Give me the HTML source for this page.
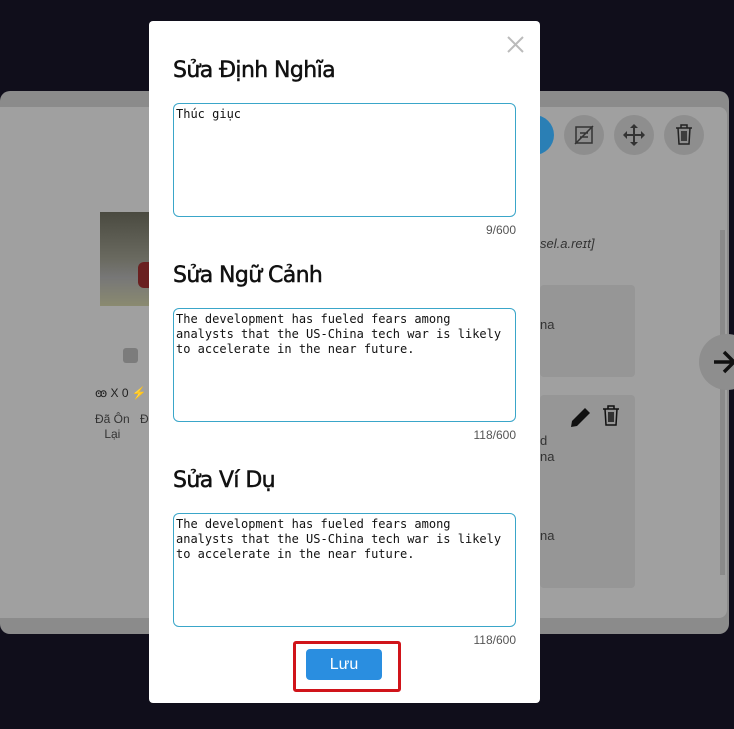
<!DOCTYPE html>
<html><head><meta charset="utf-8"><style>
*{box-sizing:border-box;margin:0;padding:0}
body{width:734px;height:729px;background:#100e1b;position:relative;overflow:hidden;font-family:"Liberation Sans",sans-serif}
.abs{position:absolute}
.outer{left:0;top:91px;width:729px;height:543px;background:#8b8b8b;border-radius:10px}
.inner{left:0;top:107px;width:727px;height:511px;background:#a0a0a0;border-radius:0 8px 8px 0}
.circ{border-radius:50%;background:#8e8e8e;width:40px;height:40px;top:115px}
.gbox{background:#969696;border-radius:4px}
.modal{left:149px;top:21px;width:391px;height:682px;background:#fff;border-radius:4px}
h2{position:absolute;left:24px;font-size:22px;font-weight:normal;color:#111;font-family:"DejaVu Sans","Liberation Sans",sans-serif;letter-spacing:-0.6px;-webkit-text-stroke:0.5px #111}
.ta{position:absolute;left:24px;width:343px;height:114px;border:1px solid #3aa6c9;border-radius:6px;font-family:"DejaVu Sans Mono",monospace;font-size:12px;line-height:15px;padding:3px 2px;color:#111}
.cnt{position:absolute;right:24px;font-size:12px;color:#555}
</style></head><body>
<div class="abs outer"></div>
<div class="abs inner"></div>
<div class="abs" style="left:100px;top:212px;width:50px;height:94px;background:linear-gradient(#4a4a40,#6a6a60 50%,#777 70%,#8a8a70)"></div>
<div class="abs" style="left:138px;top:262px;width:12px;height:26px;background:#6a2020;border-radius:6px 0 0 6px"></div>
<div class="abs" style="left:123px;top:348px;width:15px;height:15px;background:#7c7c7c;border-radius:3px"></div>
<div class="abs" style="left:95px;top:386px;font-size:12px;color:#222">ꙭ X 0 <span style="color:#c9a020">⚡</span></div>
<div class="abs" style="left:95px;top:412px;font-size:12px;color:#333;line-height:15px;text-align:center">Đã Ôn<br>Lại</div>
<div class="abs" style="left:140px;top:412px;font-size:12px;color:#333">Đ</div>
<div class="abs" style="left:530px;top:115px;width:24px;height:40px;background:#2a7fb5;border-radius:0 20px 20px 0"></div>
<div class="abs circ" style="left:564px"></div>
<svg class="abs" style="left:574px;top:125px" width="20" height="20" viewBox="0 0 20 20" fill="none" stroke="#333" stroke-width="1.5"><rect x="2" y="2" width="16" height="16"/><path d="M1 19L19 1M6 8h8M6 12h8"/></svg>
<div class="abs circ" style="left:614px"></div>
<svg class="abs" style="left:622px;top:123px" width="24" height="24" viewBox="0 0 24 24" fill="#333"><path d="M12 1l4 4h-3v6h6V8l4 4-4 4v-3h-6v6h3l-4 4-4-4h3v-6H5v3l-4-4 4-4v3h6V5H8z"/></svg>
<div class="abs circ" style="left:664px"></div>
<svg class="abs" style="left:675px;top:124px" width="18" height="21" viewBox="0 0 18 21" fill="none" stroke="#222" stroke-width="1.5"><path d="M1 4h16M6 4V1h6v3M3 4l1 16h10l1-16M7 7v10M9 7v10M11 7v10"/></svg>
<div class="abs" style="left:540px;top:236px;font-size:13px;font-style:italic;color:#333">sel.a.reɪt]</div>
<div class="abs gbox" style="left:540px;top:285px;width:95px;height:92px"></div>
<div class="abs" style="left:540px;top:317px;font-size:13px;color:#333">na</div>
<div class="abs gbox" style="left:540px;top:395px;width:95px;height:193px"></div>
<svg class="abs" style="left:570px;top:406px" width="22" height="22" viewBox="0 0 22 22" fill="#111"><path d="M1 21l1-6L15 2l5 5L7 20z"/></svg>
<svg class="abs" style="left:602px;top:405px" width="18" height="21" viewBox="0 0 18 21" fill="none" stroke="#111" stroke-width="1.5"><path d="M1 4h16M6 4V1h6v3M3 4l1 16h10l1-16M7 7v10M9 7v10M11 7v10"/></svg>
<div class="abs" style="left:540px;top:433px;font-size:13px;color:#333;line-height:16px">d<br>na</div>
<div class="abs" style="left:540px;top:528px;font-size:13px;color:#333">na</div>
<div class="abs" style="left:720px;top:230px;width:5px;height:345px;background:#8a8a8a"></div>
<div class="abs" style="left:699px;top:334px;width:56px;height:56px;border-radius:50%;background:#8e8e8e"></div>
<svg class="abs" style="left:714px;top:350px" width="22" height="24" viewBox="0 0 22 24" fill="none" stroke="#111" stroke-width="3.5"><path d="M0 12h20M10 2l10 10-10 10"/></svg>

<div class="abs modal">
<svg class="abs" style="left:358px;top:15px" width="17" height="17" viewBox="0 0 17 17" stroke="#bbb" stroke-width="2"><path d="M1 1l15 15M16 1L1 16"/></svg>
<h2 style="top:37px">Sửa Định Nghĩa</h2>
<div class="ta" style="top:82px">Thúc giục</div>
<div class="cnt" style="top:202px">9/600</div>
<h2 style="top:242px">Sửa Ngữ Cảnh</h2>
<div class="ta" style="top:287px">The development has fueled fears among analysts that the US-China tech war is likely to accelerate in the near future.</div>
<div class="cnt" style="top:407px">118/600</div>
<h2 style="top:447px">Sửa Ví Dụ</h2>
<div class="ta" style="top:492px">The development has fueled fears among analysts that the US-China tech war is likely to accelerate in the near future.</div>
<div class="cnt" style="top:612px">118/600</div>
<div class="abs" style="left:144px;top:620px;width:108px;height:51px;border:3px solid #d0141a;border-radius:3px"></div>
<div class="abs" style="left:157px;top:628px;width:76px;height:31px;background:#2a8ee0;border-radius:4px;color:#fff;font-size:16px;text-align:center;line-height:31px">Lưu</div>
</div>
</body></html>
